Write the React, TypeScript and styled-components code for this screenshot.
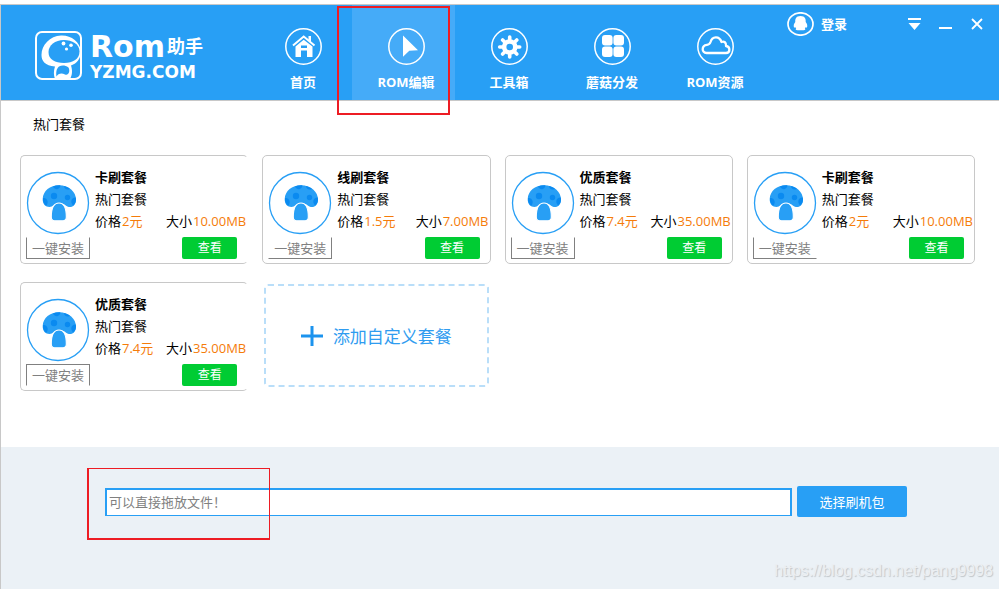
import React from 'react';
import styled, { createGlobalStyle, css } from 'styled-components';

const BLUE = '#289ff5';
const ORANGE = '#f57c0a';
const MARK = '#ed1c24';

const GlobalStyle = createGlobalStyle`
  * { box-sizing: border-box; }
  body {
    margin: 0;
    background: #fff;
    color: #000;
    font: 13px/22px "Open Sans", "Noto Sans CJK SC", sans-serif;
  }
  button, input { font: inherit; }
  button { border: 0; padding: 0; cursor: pointer; background: none; }
  h2, h3, p { margin: 0; font-size: 13px; }
`;

const Shell = styled.div`
  display: flex;
  flex-direction: column;
  min-height: calc(100vh - 4px);
  margin: 4px 3px 0 0;
  border-left: 1px solid #c8c8c8;
`;

const Header = styled.header`
  display: flex;
  height: 97px;
  border-top: 1px solid #c8c8c8;
  border-bottom: 1px solid #c8c8c8;
  background: ${BLUE};
  color: #fff;
`;

const Brand = styled.div`
  display: flex;
  align-items: flex-start;
  gap: 7px;
  width: 248px;
  flex: none;
  padding: 26px 0 0 34px;
`;

const BrandText = styled.div`
  display: flex;
  flex-direction: column;
  font-family: "DejaVu Sans", "Noto Sans CJK SC", sans-serif;
  font-weight: bold;
  white-space: nowrap;
`;

const BrandName = styled.div`
  display: flex;
  align-items: center;
  gap: 2px;
  font-size: 30px;
  line-height: 32px;
`;

const BrandCjk = styled.span`
  font-size: 18px;
`;

const BrandSite = styled.div`
  font-size: 17px;
  line-height: 18px;
`;

const Nav = styled.nav`
  display: flex;
`;

const TabCell = styled.div`
  position: relative;
  width: 103px;
`;

const Tab = styled.button<{ $active?: boolean }>`
  display: flex;
  flex-direction: column;
  align-items: center;
  gap: 8px;
  width: 100%;
  height: 100%;
  padding: 23px 0 0 5px;
  background: ${(p) => (p.$active ? '#45abf8' : 'transparent')};
  color: #fff;
  font-weight: bold;
  line-height: 18px;
  white-space: nowrap;
`;

const TabMark = styled.div`
  position: absolute;
  z-index: 1;
  top: 1px;
  left: -15px;
  width: 113px;
  height: 109px;
  border: 2px solid ${MARK};
  pointer-events: none;
`;

const HeaderTools = styled.div`
  display: flex;
  align-items: flex-start;
  margin-left: auto;
  padding: 7px 7px 0 0;
`;

const Login = styled.button`
  display: flex;
  align-items: center;
  gap: 7px;
  height: 24px;
  margin-right: 52px;
  color: #fff;
  font-weight: bold;
`;

const WindowButton = styled.button`
  display: grid;
  place-items: center;
  width: 31px;
  height: 24px;
`;

const Packages = styled.main`
  padding: 13px 24px 56px 19px;
`;

const SectionTitle = styled.h2`
  padding-left: 13px;
  margin-bottom: 21px;
  font-weight: normal;
  line-height: 20px;
`;

const Grid = styled.div`
  display: grid;
  grid-template-columns: repeat(4, minmax(0, 1fr));
  gap: 18px 14px;
`;

const Card = styled.article<{ $openRight?: boolean }>`
  display: flex;
  gap: 5px;
  height: 109px;
  padding: 0 1px 0 5px;
  border: 1px solid #c8c8c8;
  border-radius: 5px;
  ${(p) => p.$openRight && css`border-right-color: transparent;`}
`;

const CardSide = styled.div`
  display: flex;
  flex-direction: column;
  gap: 2px;
  flex: none;
  width: 64px;
  padding-top: 15px;
`;

type Side = 'top' | 'left' | 'right' | 'bottom';

const InstallButton = styled.button<{ $open: Side[] }>`
  height: 22px;
  border: 1px solid #808080;
  color: #808080;
  line-height: 20px;
  white-space: nowrap;
  ${(p) => p.$open.map((s) => `border-${s}-color: transparent;`).join(' ')}
`;

const CardBody = styled.div`
  display: flex;
  flex-direction: column;
  flex: 1;
  min-width: 0;
  padding-top: 10px;
  white-space: nowrap;
`;

const CardTitle = styled.h3`
  font-weight: bold;
`;

const Figures = styled.div`
  display: flex;
  justify-content: space-between;
`;

const Figure = styled.span`
  display: flex;
  gap: 1px;
`;

const Amount = styled.span`
  color: ${ORANGE};
`;

const ViewButton = styled.button`
  align-self: flex-end;
  width: 55px;
  height: 22px;
  margin: 5px 9px 0 0;
  border-radius: 2px;
  background: #00cc33;
  color: #fff;
  font-size: 12px;
`;

const AddButton = styled.button`
  display: flex;
  align-items: center;
  justify-content: center;
  gap: 10px;
  margin: 2px 2px 4px;
  border: 2px dashed #b9def9;
  border-radius: 4px;
  color: #2f9cf0;
  font-size: 17px;
  font-family: "Noto Sans CJK SC", sans-serif;
  white-space: nowrap;
`;

const Footer = styled.footer`
  display: flex;
  flex-direction: column;
  flex: 1;
  padding: 39px 6px 6px 104px;
  background: #ebf1f6;
`;

const FileRow = styled.form`
  position: relative;
  display: flex;
  align-items: center;
  gap: 5px;
  margin-right: 86px;
`;

const FileInput = styled.input`
  flex: 1;
  min-width: 0;
  height: 28px;
  padding: 0 2px;
  border: 2px solid ${BLUE};
  border-bottom-width: 1px;
  background: #fff;
  outline: 0;
  &::placeholder { color: #808080; opacity: 1; }
`;

const ChooseButton = styled.button`
  width: 110px;
  height: 31px;
  border-radius: 2px;
  background: ${BLUE};
  color: #fff;
`;

const FileMark = styled.div`
  position: absolute;
  top: -18px;
  left: -18px;
  width: 183px;
  height: 72px;
  border: solid ${MARK};
  border-width: 1px 1px 2px 2px;
  pointer-events: none;
`;

const Watermark = styled.p`
  align-self: flex-end;
  margin-top: auto;
  color: #eceff2;
  font: 16px/24px "Liberation Sans", sans-serif;
  text-shadow: 1px 1px 1px #c0c5c9;
`;

const LogoIcon = () => (
  <svg width="48" height="49" viewBox="0 0 48 49" fill="none">
    <rect x="1" y="1" width="45" height="47" rx="6" stroke="#fff" strokeWidth="2" />
    <path d="M26 4.500C15 5 6.500 14 6.500 24C6.500 30 10 34.500 20 35.500C18.500 40 18.500 44 20 48H35C37.500 44 37.500 39 36 34.500C42 32.500 46 27 46 20C45 11 36 4 26 4.500Z" fill="#fff" />
    <path d="M29 9C20 9 13.500 14.500 13.500 21C13.500 28.500 20 32 29 32C38 32 44.500 28 44.500 20.500C44.500 13 37 9 29 9Z" fill={BLUE} />
    <path d="M24 35.500C21 38 21 42 21.500 45.500C23 43 26 41.500 30 43.500C33.500 45 35.500 40 33.500 36.500C30 34 27 34 24 35.500Z" fill={BLUE} />
    <g fill="#fff">
      <circle cx="28.500" cy="12.500" r="1.900" />
      <circle cx="36" cy="14.300" r="1.800" />
      <circle cx="31.500" cy="18" r="1.600" />
    </g>
  </svg>
);

const Ring = ({ children }: { children: React.ReactNode }) => (
  <svg width="37" height="37" viewBox="0 0 37 37" fill="none">
    <circle cx="18.500" cy="18.500" r="17.700" stroke="#fff" strokeWidth="1.500" />
    {children}
  </svg>
);

const HomeIcon = () => (
  <Ring>
    <path d="M8 17.500L18.700 8.500L29.500 17.500" stroke="#fff" strokeWidth="2" />
    <path d="M23.500 8H26V14L23.500 12Z" fill="#fff" />
    <path d="M10.500 18.500L18.700 11.800L27.500 18.500V29H22V22.500H16V29H10.500Z" fill="#fff" />
    <path d="M16 17.500H22V20H16Z" fill={BLUE} />
  </Ring>
);

const CursorIcon = () => (
  <Ring>
    <path d="M15 7.500L30 22.300L21.300 22.700L15 28.800Z" fill="#fff" />
  </Ring>
);

const GearIcon = () => (
  <Ring>
    <g stroke="#fff" strokeWidth="3.600" strokeLinecap="round">
      {[0, 45, 90, 135].map((a) => (
        <path key={a} d="M18.700 9V29" transform={`rotate(${a} 18.700 19)`} />
      ))}
    </g>
    <circle cx="18.700" cy="19" r="7.800" fill="#fff" />
    <circle cx="18.700" cy="19" r="3.300" fill={BLUE} />
  </Ring>
);

const TilesIcon = () => (
  <Ring>
    <g fill="#fff">
      <rect x="8" y="7" width="10.600" height="10.500" rx="3" />
      <rect x="19.400" y="7" width="10.600" height="10.500" rx="3" />
      <rect x="8" y="18.500" width="10.600" height="10.500" rx="3" />
      <rect x="19.400" y="18.500" width="10.600" height="10.500" rx="3" />
    </g>
  </Ring>
);

const CloudIcon = () => (
  <Ring>
    <path
      d="M9.500 25C4.500 25 4.200 17.500 10 16.800C11.500 16.600 13 15.500 13.500 14C15 8 22.500 7.500 24.500 14C27 12.800 29.500 14.500 29 18C33.500 18.500 33.500 25 29 25Z"
      stroke="#fff"
      strokeWidth="2.300"
      strokeLinejoin="round"
    />
  </Ring>
);

const PenguinIcon = () => (
  <svg width="27" height="24" viewBox="0 0 27 24" fill="none">
    <ellipse cx="13.500" cy="12" rx="12.500" ry="11.200" stroke="#fff" strokeWidth="1.700" />
    <path d="M13.500 4C9 4 8 7 8.300 10C7 11.500 6.300 13.500 7 15.500C7.500 15.800 8 15.300 8.300 15C8.500 15.700 8.800 16.200 9.200 16.600C8.200 17 8.500 18.200 10.500 18.200H16.500C18.500 18.200 18.800 17 17.800 16.600C18.200 16.200 18.500 15.700 18.700 15C19 15.300 19.500 15.800 20 15.500C20.700 13.500 20 11.500 18.700 10C19 7 18 4 13.500 4Z" fill="#fff" />
  </svg>
);

const MushroomIcon = () => (
  <svg width="64" height="64" viewBox="0 0 64 64">
    <circle cx="32" cy="32" r="30.500" fill="#fff" stroke={BLUE} strokeWidth="1.300" />
    <path d="M16.700 28C17 20 24 14.300 33 14.300C43 14.300 50 21 50 28.500C50 33.500 47 36.500 43 36C40 35.500 39 32.500 33.500 32C28 32.500 27 36 23.500 36C19.500 36 16.500 33 16.700 28Z" fill={BLUE} />
    <g fill="#0a8af0">
      <circle cx="28" cy="25" r="3.200" />
      <circle cx="41.500" cy="26.500" r="2.700" />
      <path d="M27 15.500C29 19.500 33.500 19 34.500 14.400C32 14.200 29.500 14.500 27 15.500Z" />
      <path d="M17 27C21 26 23.500 31.500 20 34.700C18 33 16.600 30.500 17 27Z" />
      <path d="M49.800 26.500C46 26 43.500 30.500 47 34.500C49.500 33 50.500 29.500 49.800 26.500Z" />
      <path d="M38 15C38 18 41 19.500 44 18C42.500 16.500 40.500 15.500 38 15Z" />
    </g>
    <path d="M25.300 46C25.300 37 28 32 33 32C38 32 40.300 37 40.300 46C40.300 48.500 39.500 49.700 37 49.700H28.500C26 49.700 25.300 48.500 25.300 46Z" fill={BLUE} stroke="#fff" strokeWidth="1.100" />
  </svg>
);

const TABS = [
  { label: '首页', Icon: HomeIcon },
  { label: 'ROM编辑', Icon: CursorIcon, active: true },
  { label: '工具箱', Icon: GearIcon },
  { label: '蘑菇分发', Icon: TilesIcon },
  { label: 'ROM资源', Icon: CloudIcon },
];

interface Pack {
  name: string;
  price: string;
  size: string;
  open: Side[];
  openRight?: boolean;
}

const PACKS: Pack[] = [
  { name: '卡刷套餐', price: '2元', size: '10.00MB', open: ['top'], openRight: true },
  { name: '线刷套餐', price: '1.5元', size: '7.00MB', open: ['top', 'left'] },
  { name: '优质套餐', price: '7.4元', size: '35.00MB', open: ['top'] },
  { name: '卡刷套餐', price: '2元', size: '10.00MB', open: ['top', 'right'] },
  { name: '优质套餐', price: '7.4元', size: '35.00MB', open: ['bottom'], openRight: true },
];

const PackCard = ({ pack }: { pack: Pack }) => (
  <Card $openRight={pack.openRight}>
    <CardSide>
      <MushroomIcon />
      <InstallButton $open={pack.open}>一键安装</InstallButton>
    </CardSide>
    <CardBody>
      <CardTitle>{pack.name}</CardTitle>
      <p>热门套餐</p>
      <Figures>
        <Figure>价格<Amount>{pack.price}</Amount></Figure>
        <Figure>大小<Amount>{pack.size}</Amount></Figure>
      </Figures>
      <ViewButton>查看</ViewButton>
    </CardBody>
  </Card>
);

export default function App() {
  return (
    <>
      <GlobalStyle />
      <Shell>
        <Header>
          <Brand>
            <LogoIcon />
            <BrandText>
              <BrandName>Rom<BrandCjk>助手</BrandCjk></BrandName>
              <BrandSite>YZMG.COM</BrandSite>
            </BrandText>
          </Brand>
          <Nav>
            {TABS.map(({ label, Icon, active }) => (
              <TabCell key={label}>
                <Tab $active={active}>
                  <Icon />
                  {label}
                </Tab>
                {active && <TabMark />}
              </TabCell>
            ))}
          </Nav>
          <HeaderTools>
            <Login><PenguinIcon />登录</Login>
            <WindowButton aria-label="菜单">
              <svg width="13" height="12" viewBox="0 0 13 12" fill="#fff">
                <path d="M0 0H13V2H0ZM0.500 5H12.500L6.500 12Z" />
              </svg>
            </WindowButton>
            <WindowButton aria-label="最小化">
              <svg width="13" height="12" viewBox="0 0 13 12" fill="#fff">
                <path d="M0 9H13V11H0Z" />
              </svg>
            </WindowButton>
            <WindowButton aria-label="关闭">
              <svg width="12" height="12" viewBox="0 0 12 12" stroke="#fff" strokeWidth="1.800">
                <path d="M1 1L11 11M11 1L1 11" />
              </svg>
            </WindowButton>
          </HeaderTools>
        </Header>
        <Packages>
          <SectionTitle>热门套餐</SectionTitle>
          <Grid>
            {PACKS.map((pack, i) => <PackCard key={i} pack={pack} />)}
            <AddButton>
              <svg width="22" height="22" viewBox="0 0 22 22" stroke="#1c93ee" strokeWidth="3">
                <path d="M11 1V21M0 11H22" />
              </svg>
              添加自定义套餐
            </AddButton>
          </Grid>
        </Packages>
        <Footer>
          <FileRow onSubmit={(e) => e.preventDefault()}>
            <FileInput type="text" aria-label="刷机包文件" placeholder="可以直接拖放文件！" />
            <ChooseButton type="button">选择刷机包</ChooseButton>
            <FileMark />
          </FileRow>
          <Watermark>https://blog.csdn.net/pang9998</Watermark>
        </Footer>
      </Shell>
    </>
  );
}
